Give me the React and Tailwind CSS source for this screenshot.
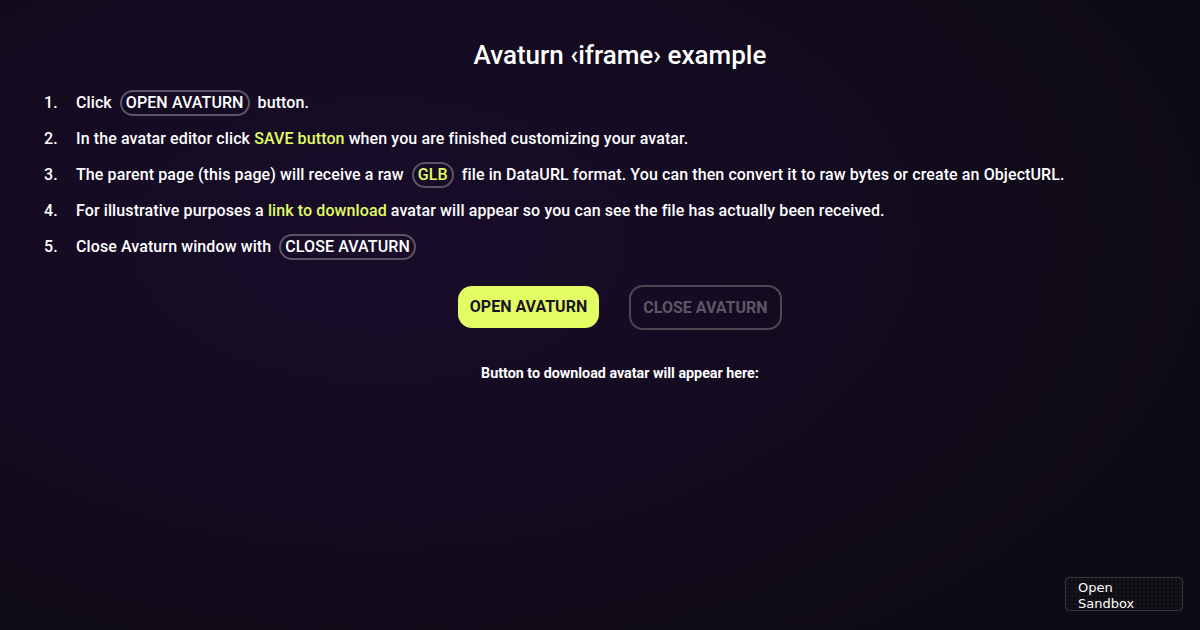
import React from "react";

const Chip = ({ children, accent }) => (
    <span
        className={`mx-2 inline-flex h-[26px] items-center rounded-full border-2 border-[#5b5563] px-[4px] align-middle ${
            accent ? "text-[#e2fd63]" : "text-white"
        }`}
    >
        {children}
    </span>
);

const steps = [
    <>
        Click<Chip>OPEN AVATURN</Chip>button.
    </>,
    <>
        In the avatar editor click <span className="text-[#e2fd63]">SAVE button</span> when you are finished customizing your avatar.
    </>,
    <>
        The parent page (this page) will receive a raw<Chip accent>GLB</Chip>file in DataURL format. You can then convert it to raw bytes or create an ObjectURL.
    </>,
    <>
        For illustrative purposes a <span className="text-[#e2fd63]">link to download</span> avatar will appear so you can see the file has actually been received.
    </>,
    <>
        Close Avaturn window with<Chip>CLOSE AVATURN</Chip>
    </>,
];

export default function App() {
    return (
        <div
            className="relative h-[630px] w-[1200px] overflow-hidden text-white"
            style={{
                fontFamily: "Roboto, 'Liberation Sans', sans-serif",
                background:
                    "radial-gradient(ellipse 900px 520px at 380px 240px, #190d2a 0%, #140b21 45%, #0e0b14 100%)",
            }}
        >
            <div className="flex flex-col pl-10">
                <h1 className="mt-[39px] text-center text-[26px] font-medium leading-[32px]">Avaturn ‹iframe› example</h1>

                <ol className="mt-[19px] flex flex-col gap-[10px] text-[16px] font-medium tracking-[0.1px]">
                    {steps.map((step, i) => (
                        <li key={i} className="flex h-[26px] items-center">
                            <span className="w-9 pl-1">{i + 1}.</span>
                            <span className="leading-[26px]">{step}</span>
                        </li>
                    ))}
                </ol>

                <div className="mt-[26px] flex justify-center gap-[30px]">
                    <button className="h-[42px] w-[141px] rounded-[14px] bg-[#e2fd63] text-[16px] font-bold text-[#1b1325]">
                        OPEN AVATURN
                    </button>
                    <button
                        disabled
                        className="-mt-[1px] h-[45px] w-[153px] rounded-[14px] border-2 border-[#4d4854] text-[16px] font-bold text-[#5c5765]"
                    >
                        CLOSE AVATURN
                    </button>
                </div>

                <p className="mt-[33px] text-center text-[14.3px] font-bold">Button to download avatar will appear here:</p>
            </div>

            <div
                className="absolute bottom-[19px] right-[17px] h-[34px] w-[118px] rounded-[4px] border border-[#3a3540] bg-[#0f0d14] pl-3 text-[13px] leading-[16px] text-white"
                style={{
                    fontFamily: "'DejaVu Sans', sans-serif",
                    backgroundImage: "radial-gradient(#2a2730 0.6px, transparent 0.8px)",
                    backgroundSize: "4px 4px",
                }}
            >
                <div className="w-[50px] pt-[2px]">Open Sandbox</div>
            </div>
        </div>
    );
}
